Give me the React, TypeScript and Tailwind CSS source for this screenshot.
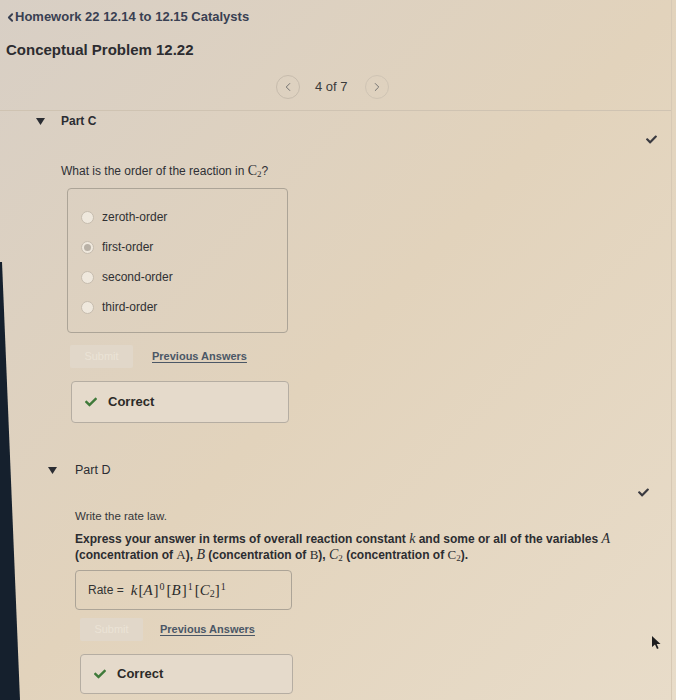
import { FaCheck } from 'react-icons/fa'
import { ChevronLeft, ChevronRight } from 'lucide-react'

const serif = "font-['Liberation_Serif','Times_New_Roman',serif]"

function Caret() {
  return (
    <svg width="9" height="7" viewBox="0 0 9 7" className="shrink-0">
      <path d="M0 0 L9 0 L4.5 7 Z" fill="#2b2d33" />
    </svg>
  )
}

function Radio({ checked }: { checked?: boolean }) {
  return (
    <span className="flex h-[13px] w-[13px] shrink-0 items-center justify-center rounded-full border border-[#c6bcae] bg-[#efe8dd]">
      {checked && <span className="h-[7px] w-[7px] rounded-full bg-[#b9b1a6]" />}
    </span>
  )
}

function SubmitRow({ left, gap }: { left: string; gap: string }) {
  return (
    <div className={`flex items-center ${left}`}>
      <button className="h-[23px] w-[63px] rounded-[2px] bg-[#e1d7c9] text-[11px] text-[#ebe3d6]">Submit</button>
      <a className={`${gap} text-[11px] font-bold text-[#4b5766] underline underline-offset-2`}>Previous Answers</a>
    </div>
  )
}

function CorrectBox({ className }: { className: string }) {
  return (
    <div className={`flex items-center rounded-[4px] border border-[#b5ada2] bg-[#e5dacb] ${className}`}>
      <FaCheck className="text-[#3f7a3a]" size={12} />
      <span className="ml-[11px] text-[13px] font-bold text-[#2c2a28]">Correct</span>
    </div>
  )
}

export default function App() {
  const options = ['zeroth-order', 'first-order', 'second-order', 'third-order']

  return (
    <div className="relative h-[700px] w-[676px] overflow-hidden bg-linear-to-br from-[#d8cfc5] via-[#e2d3bc] to-[#e8dcc9] font-['Liberation_Sans',Arial,sans-serif] text-[#2f3035]">
      <div className="mr-[4px] h-full border-r border-[#d7c9b5]">
        {/* header */}
        <div className="pl-[6px] pt-[9px]">
          <div className="flex h-[16px] items-center text-[13px] font-bold text-[#394052]">
            <ChevronLeft size={13} strokeWidth={3.5} className="-ml-[2px] -mr-[2px]" />
            <span>Homework 22 12.14 to 12.15 Catalysts</span>
          </div>
          <h1 className="mt-[16px] h-[18px] text-[15px] leading-[18px] font-bold text-[#2c2c30]">Conceptual Problem 12.22</h1>
        </div>

        <div className="mt-[16px] flex items-center pl-[276px]">
          <span className="flex h-[24px] w-[24px] items-center justify-center rounded-full border border-[#c7bcad] text-[#6a6a6a]">
            <ChevronLeft size={14} strokeWidth={1.6} />
          </span>
          <span className="ml-[15px] text-[13px] text-[#3b3b3b]">4 of 7</span>
          <span className="ml-[17px] flex h-[24px] w-[24px] items-center justify-center rounded-full border border-[#cfc4b4] text-[#6a6a6a]">
            <ChevronRight size={14} strokeWidth={1.6} />
          </span>
        </div>

        <div className="mt-[11px] border-t border-[#cfc3b2]" />

        {/* Part C */}
        <div className="pt-[3px]">
          <div className="flex h-[14px] items-center pl-[36px]">
            <Caret />
            <span className="ml-[16px] text-[12px] font-bold text-[#2b2d33]">Part C</span>
          </div>
          <div className="mt-[6px] flex h-[10px] justify-end pr-[14px]">
            <FaCheck size={11} className="text-[#3a3a40]" />
          </div>
          <p className="mt-[19px] pl-[61px] text-[12px] leading-[15px]">
            What is the order of the reaction in <span className={`${serif} text-[14px]`}>C<sub className="text-[9px]">2</sub></span>?
          </p>
          <div className="ml-[67px] mt-[9px] w-[221px] rounded-[4px] border border-[#aca497] pb-[10px] pl-[13px] pt-[13px]">
            {options.map((o, i) => (
              <div key={o} className="flex h-[30px] items-center">
                <Radio checked={i === 1} />
                <span className="ml-[8px] text-[12px] text-[#303033]">{o}</span>
              </div>
            ))}
          </div>
          <div className="mt-[12px]">
            <SubmitRow left="pl-[70px]" gap="ml-[19px]" />
          </div>
          <CorrectBox className="ml-[71px] mt-[13px] h-[42px] w-[218px] pl-[13px]" />
        </div>

        {/* Part D */}
        <div className="mt-[40px]">
          <div className="flex h-[14px] items-center pl-[48px]">
            <Caret />
            <span className="ml-[18px] text-[12.5px] text-[#2b2d33]">Part D</span>
          </div>
          <div className="mt-[10px] flex h-[10px] justify-end pr-[22px]">
            <FaCheck size={11} className="text-[#3a3a40]" />
          </div>
          <p className="mt-[12px] pl-[75px] text-[11.5px] leading-[15px] text-[#35363a]">Write the rate law.</p>
          <p className="mt-[7px] pl-[75px] text-[12px] leading-[15px] font-bold text-[#2c2d31]">
            Express your answer in terms of overall reaction constant <span className={`${serif} font-normal italic text-[14px]`}>k</span> and some or all of the variables <span className={`${serif} font-normal italic text-[14px]`}>A</span>
            <br />
            (concentration of <span className={`${serif} font-normal text-[13px]`}>A</span>), <span className={`${serif} font-normal italic text-[14px]`}>B</span> (concentration of <span className={`${serif} font-normal text-[13px]`}>B</span>), <span className={`${serif} font-normal italic text-[14px]`}>C<sub className="text-[9px] not-italic">2</sub></span> (concentration of <span className={`${serif} font-normal text-[13px]`}>C<sub className="text-[9px]">2</sub></span>).
          </p>
          <div className="ml-[75px] mt-[7px] flex h-[40px] w-[217px] items-center rounded-[4px] border border-[#aca497] pl-[12px]">
            <span className="text-[12px] text-[#333]">Rate =</span>
            <span className={`${serif} ml-[7px] text-[15px] text-[#2b2b2b]`}>
              <i>k</i>
              <span className="ml-[1px]">[</span><i>A</i><span className="ml-[1px]">]</span>
              <sup className="ml-[1px] mr-[2px] text-[10px]">0</sup>
              [<i>B</i><span className="ml-[1px]">]</span>
              <sup className="ml-[1px] mr-[2px] text-[10px]">1</sup>
              [<i>C</i><sub className="text-[10px]">2</sub>]
              <sup className="ml-[1px] text-[10px]">1</sup>
            </span>
          </div>
          <div className="mt-[8px]">
            <SubmitRow left="pl-[80px]" gap="ml-[17px]" />
          </div>
          <CorrectBox className="ml-[80px] mt-[13px] h-[40px] w-[213px] pl-[13px]" />
        </div>
      </div>

      {/* monitor bezel at the left edge of the photo */}
      <svg className="absolute left-0 top-0" width="24" height="700" viewBox="0 0 24 700">
        <polygon points="0,262 2,262 20,700 0,700" fill="#15202d" />
      </svg>
      {/* mouse pointer */}
      <svg className="absolute left-[652px] top-[636px]" width="10" height="14" viewBox="0 0 10 14">
        <path d="M0 0 L0 11 L3 8.5 L5 13 L6.6 12.3 L4.7 8 L8.5 8 Z" fill="#1d1d1f" />
      </svg>
    </div>
  )
}
